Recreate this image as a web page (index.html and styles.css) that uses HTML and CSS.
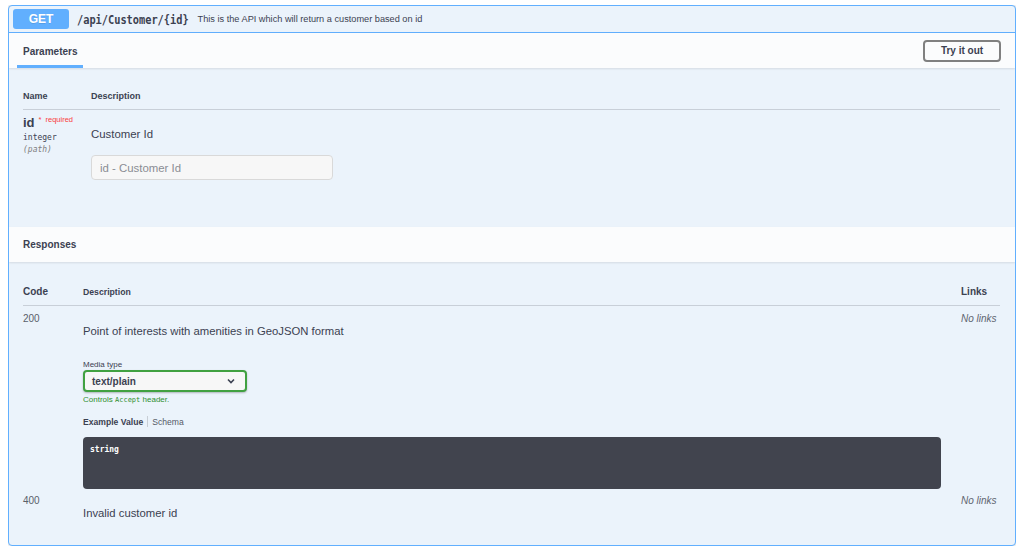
FILE: index.html
```html
<!DOCTYPE html>
<html lang="en">
<head>
    <meta charset="UTF-8">
    <meta name="viewport" content="width=device-width, initial-scale=1.0">
    <title>Customer API</title>
    <link rel="stylesheet" href="styles.css">
</head>
<body>
  <div class="opblock">
    <div class="opblock-summary">
      <span class="method">GET</span>
      <span class="path">/api/Customer/{id}</span>
      <span class="summary-desc">This is the API which will return a customer based on id</span>
    </div>

    <!-- Parametros -->
    <div class="section-header">
      <div class="tab">Parameters</div>
      <button type="button" class="try-out">Try it out</button>
    </div>
    <div class="params">
      <div class="params-head">
        <div class="col-name">Name</div>
        <div>Description</div>
      </div>
      <div class="param-row">
        <div class="col-name">
          <div class="param-name">id<span class="req"><span class="star">*</span>required</span></div>
          <div class="param-type">integer</div>
          <div class="param-in">(path)</div>
        </div>
        <div class="param-desc">
          <p>Customer Id</p>
          <input type="text" placeholder="id - Customer Id">
        </div>
      </div>
    </div>

    <!-- Respuestas -->
    <div class="section-header">
      <div class="section-title">Responses</div>
    </div>
    <div class="responses">
      <div class="resp-head">
        <div class="col-code">Code</div>
        <div class="col-desc small">Description</div>
        <div class="col-links">Links</div>
      </div>
      <div class="resp-row">
        <div class="col-code code">200</div>
        <div class="col-desc">
          <p class="resp-text">Point of interests with amenities in GeoJSON format</p>
          <div class="media-label">Media type</div>
          <div class="media-select">
            <span>text/plain</span>
            <svg width="10" height="10" viewBox="0 0 10 10"><path d="M2 3.5 L5 6.5 L8 3.5" fill="none" stroke="#3b4151" stroke-width="1.6"/></svg>
          </div>
          <div class="media-note">Controls <code>Accept</code> header.</div>
          <div class="example-tabs"><b>Example Value</b><span class="sep"></span><span class="schema">Schema</span></div>
          <pre class="example">string</pre>
        </div>
        <div class="col-links nolinks">No links</div>
      </div>
      <div class="resp-row">
        <div class="col-code code">400</div>
        <div class="col-desc">
          <p class="resp-text">Invalid customer id</p>
        </div>
        <div class="col-links nolinks">No links</div>
      </div>
    </div>
  </div>
</body>
</html>
```

FILE: styles.css
```css
body {
  margin: 5px 8px 0;
  background-color: #ffffff;
  font-family: 'Liberation Sans', Arial, sans-serif;
  color: #3b4151;
}

.opblock {
  border: 1px solid #61affe;
  border-radius: 4px;
  background-color: #ebf3fb;
  height: 539px;
  box-shadow: 0 0 3px rgba(0, 0, 0, 0.19);
  overflow: hidden;
}

/* ------RESUMEN------- */
.opblock-summary {
  display: flex;
  align-items: center;
  padding: 3px 4px;
  border-bottom: 1px solid #61affe;
}

.method {
  width: 56px;
  height: 20px;
  line-height: 20px;
  border-radius: 3px;
  background-color: #61affe;
  color: #fff;
  font-size: 12px;
  font-weight: bold;
  text-align: center;
  text-shadow: 0 1px 0 rgba(0, 0, 0, 0.1);
}

.path {
  margin-left: 8px;
  font-family: 'DejaVu Sans Mono', monospace;
  font-size: 10.3px;
  font-weight: bold;
  transform: scaleY(1.2);
}

.summary-desc {
  margin-left: 9px;
  font-size: 9.2px;
}

/* ------CABECERAS------- */
.section-header {
  display: flex;
  align-items: center;
  justify-content: space-between;
  height: 35px;
  padding: 0 14px 0 8px;
  background-color: #fbfcfd;
  box-shadow: 0 1px 2px rgba(0, 0, 0, 0.1);
}

.tab {
  align-self: stretch;
  display: flex;
  align-items: center;
  padding: 4px 6px 0;
  font-size: 10px;
  font-weight: bold;
  border-bottom: 3px solid #61affe;
  box-sizing: border-box;
}

.try-out {
  width: 78px;
  height: 22px;
  padding: 0;
  background: transparent;
  border: 2px solid #808080;
  border-radius: 4px;
  font-family: 'Liberation Sans', Arial, sans-serif;
  font-size: 10px;
  font-weight: bold;
  color: #3b4151;
}

.section-title {
  padding-left: 6px;
  font-size: 10px;
  font-weight: bold;
}

/* ------PARAMETROS------- */
.params {
  height: 159px;
  box-sizing: border-box;
  padding: 21px 15px 0 14px;
}

.params-head {
  display: flex;
  height: 18px;
  padding-top: 2px;
  font-size: 9px;
  font-weight: bold;
  border-bottom: 1px solid rgba(59, 65, 81, 0.2);
}

.col-name {
  width: 68px;
}

.param-row {
  display: flex;
  padding-top: 5px;
}

.param-name {
  font-size: 13px;
  font-weight: bold;
}

.req {
  position: relative;
  top: -5px;
  margin-left: 4px;
  font-size: 7.5px;
  font-weight: normal;
  color: #f93e3e;
}

.star {
  margin-right: 4px;
}

.param-type {
  margin-top: 3px;
  font-family: 'DejaVu Sans Mono', monospace;
  font-size: 8px;
  transform-origin: left;
  transform: scaleY(1.15);
}

.param-in {
  margin-top: 3px;
  font-family: 'DejaVu Sans Mono', monospace;
  font-size: 8px;
  font-style: italic;
  color: #808080;
  transform-origin: left;
  transform: scaleY(1.15);
}

.param-desc p {
  margin: 13px 0 15px;
  font-size: 11.4px;
}

.param-desc input {
  width: 242px;
  height: 25px;
  box-sizing: border-box;
  padding: 0 8px;
  border: 1px solid #d9d9d9;
  border-radius: 4px;
  background-color: #f7f7f7;
  font-family: 'Liberation Sans', Arial, sans-serif;
  font-size: 11.4px;
}

.param-desc input::placeholder {
  color: #8a8d94;
}

/* ------RESPUESTAS------- */
.responses {
  padding: 16px 15px 0 14px;
}

.resp-head {
  display: flex;
  align-items: center;
  height: 27px;
  font-size: 10px;
  font-weight: bold;
  border-bottom: 1px solid rgba(59, 65, 81, 0.2);
}

.col-code {
  width: 60px;
  flex-shrink: 0;
}

.col-desc {
  width: 858px;
  flex-shrink: 0;
}

.col-desc.small {
  font-size: 8.7px;
}

.col-links {
  margin-left: 20px;
  white-space: nowrap;
}

.resp-row {
  display: flex;
  padding-top: 7px;
}

.resp-row + .resp-row {
  padding-top: 6px;
}

.code {
  font-size: 10px;
  color: #5a5f6a;
}

.nolinks {
  font-size: 10px;
  font-style: italic;
  color: #606470;
}

.resp-text {
  margin: 12px 0 0;
  font-size: 11.3px;
}

.media-label {
  margin-top: 23px;
  font-size: 8px;
}

.media-select {
  display: flex;
  align-items: center;
  justify-content: space-between;
  width: 164px;
  height: 22px;
  margin-top: 1px;
  padding: 0 9px 0 7px;
  box-sizing: border-box;
  border: 2px solid #41a141;
  border-radius: 4px;
  background-color: #f7f7f7;
  font-size: 10px;
  font-weight: bold;
  box-shadow: 0 1px 2px rgba(0, 0, 0, 0.25);
}

.media-note {
  margin-top: 3px;
  font-size: 8px;
  color: #2f8f2f;
}

.media-note code {
  font-family: 'DejaVu Sans Mono', monospace;
  font-size: 7px;
}

.example-tabs {
  display: flex;
  align-items: center;
  margin-top: 12px;
  font-size: 8.6px;
}

.sep {
  width: 1px;
  height: 11px;
  margin: 0 4px;
  background-color: rgba(0, 0, 0, 0.15);
}

.schema {
  color: #555a66;
}

.example {
  height: 52px;
  margin: 10px 0 0;
  padding: 8px 7px;
  box-sizing: border-box;
  border-radius: 4px;
  background-color: #41444e;
  color: #fff;
  font-family: 'DejaVu Sans Mono', monospace;
  font-size: 8px;
  font-weight: bold;
}
```
